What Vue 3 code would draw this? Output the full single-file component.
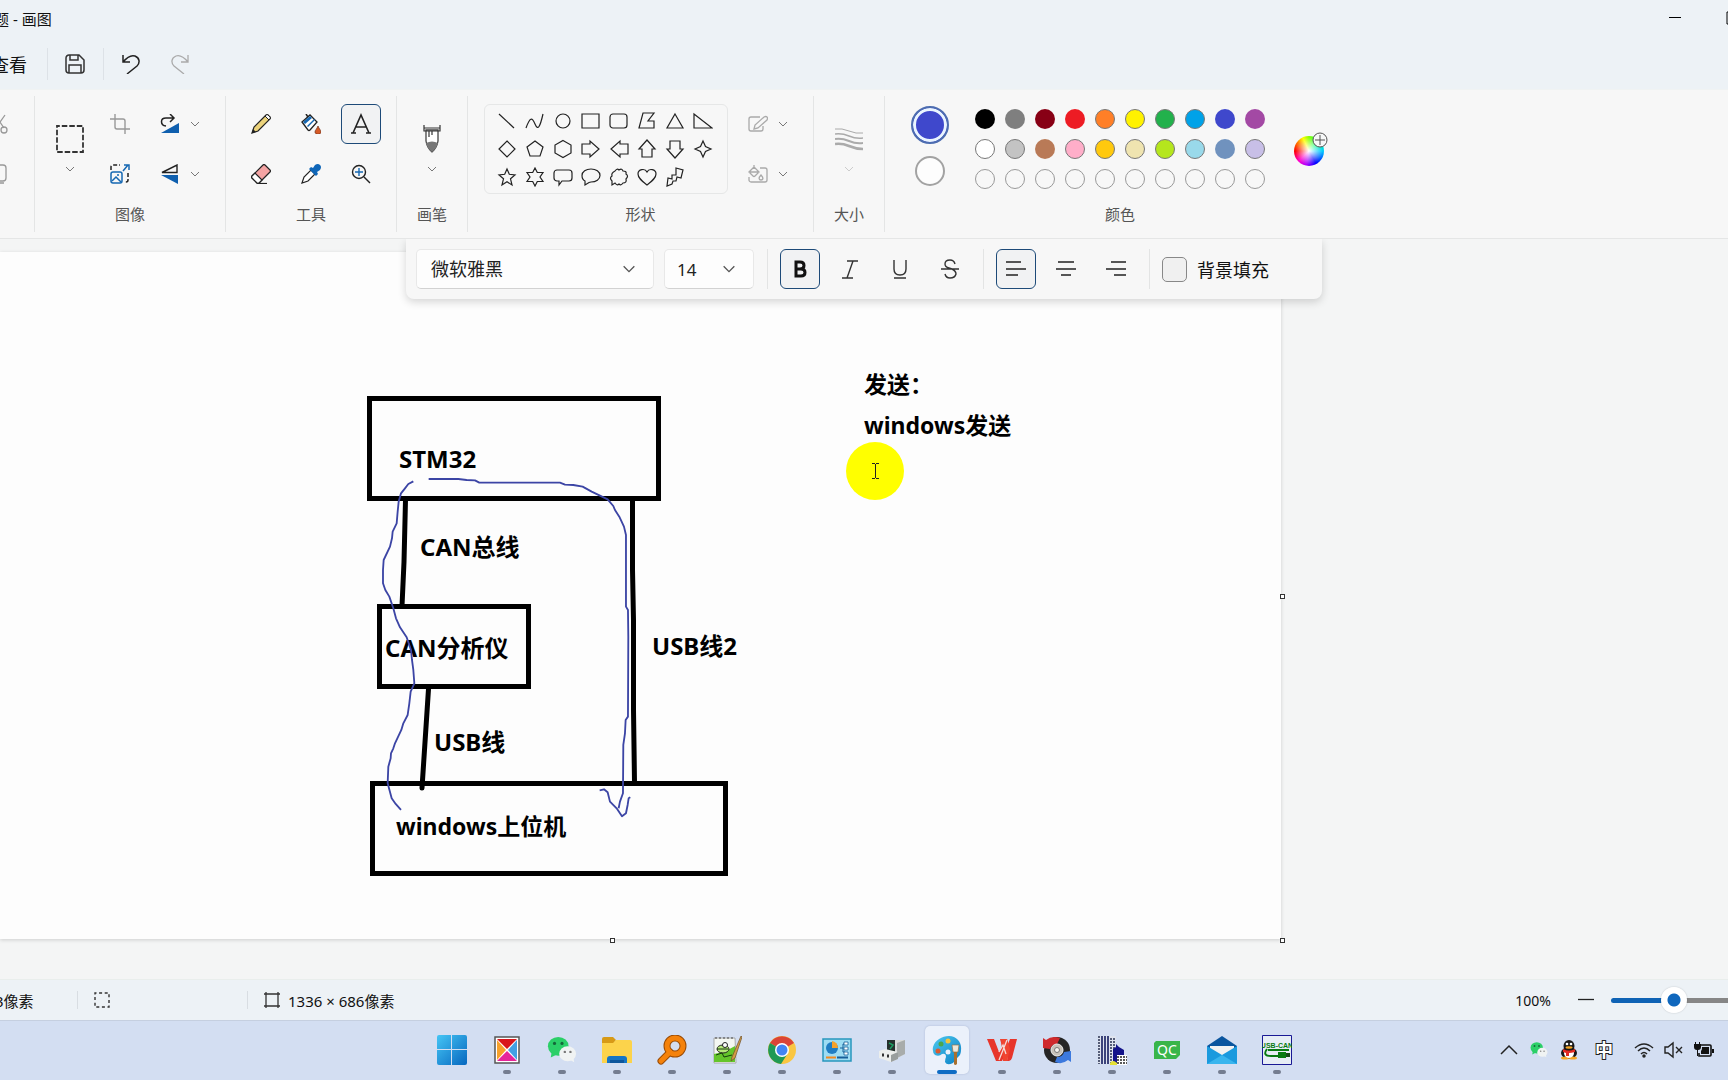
<script setup>
import { ref } from 'vue'

const shapes = [
  'M2 3 17 17',
  'M1 17C5 6 7 6 10 13S15 16 18 3',
  'M10 3a7 7 0 1 0 0 14a7 7 0 1 0 0-14z',
  'M1 3h17v14H1z',
  'M4 3h11a3 3 0 0 1 3 3v8a3 3 0 0 1-3 3H4a3 3 0 0 1-3-3V6a3 3 0 0 1 3-3z',
  'M6 2h11l-6 8h6v7H2z',
  'M10 3 18 17H2z',
  'M1 3v14h18z',
  'M10 2l8 8-8 8-8-8z',
  'M10 2l8 6-3 9H5L2 8z',
  'M10 1.500l8 4.500v8l-8 4.500L2 14V6z',
  'M1 5h8V2l9 8-9 8v-3H1z',
  'M19 5h-8V2l-9 8 9 8v-3h8z',
  'M10 1 2 10h3v8h10v-8h3z',
  'M10 19l-8-9h3V2h10v8h3z',
  'M10 2l2.500 5.500L18 10l-5.500 2.500L10 18l-2.500-5.500L2 10l5.500-2.500z',
  'M10 2l2.300 5.300L18 8l-4.500 3.800L15 18l-5-3.300L5 18l1.500-6.200L2 8l5.700-.7z',
  'M10 1l2.300 4.500L18 5.500l-3 4.500 3 4.500h-5.700L10 19l-2.300-4.500H2L5 10 2 5.500h5.700z',
  'M4 3h12a3 3 0 0 1 3 3v5a3 3 0 0 1-3 3H9l-3 4v-4H4a3 3 0 0 1-3-3V6a3 3 0 0 1 3-3z',
  'M10 2c5 0 9 2.700 9 6.500S15 15 10 15l-2 .5L4 18v-4C2 13 1 11 1 8.500 1 4.700 5 2 10 2z',
  'M6 4q2-3 4-1 3-2 4 1 4 0 3 3 3 2 0 5 1 4-3 4-2 3-4 1-2 2-4-1l-3 2v-4q-3-3 0-5-1-3 3-5z',
  'M10 18C5 14 1 11 1 7c0-5 7-6 9-2 2-4 9-3 9 2 0 4-4 7-9 11z',
  'M11 1 18 3l-2 8-4-1-1 4H8l-1 3-5 2 1-8 4 1V8l4 0z'
]

const palette = [
  ['#000000', '#7f7f7f', '#880015', '#ed1c24', '#ff7f27', '#fff200', '#22b14c', '#00a2e8', '#3f48cc', '#a349a4'],
  ['#ffffff', '#c3c3c3', '#b97a57', '#ffaec9', '#ffc90e', '#efe4b0', '#b5e61d', '#99d9ea', '#7092be', '#c8bfe7'],
  Array(10).fill('')
]
const borderless = ['#000000', '#7f7f7f', '#880015', '#ed1c24', '#3f48cc', '#a349a4', '#b97a57', '#7092be']

const fontFamily = ref('微软雅黑')
const fontSize = ref('14')
const fillBackground = ref(false)
const zoom = ref(50)
</script>

<template>
  <div class="window">
    <svg class="defs" aria-hidden="true">
      <symbol id="chev" viewBox="0 0 12 12"><path d="M2 4l4 4 4-4" fill="none" stroke="currentColor" /></symbol>
      <symbol id="wechat" viewBox="0 0 32 32">
        <ellipse cx="12" cy="12" rx="11" ry="10" fill="#2bcf68" /><path d="M5 18l-1 6 6-3z" fill="#2bcf68" />
        <circle cx="8" cy="9" r="1.700" fill="#14683a" /><circle cx="16" cy="9" r="1.700" fill="#14683a" />
        <ellipse cx="22" cy="20" rx="9" ry="8" fill="#f0f3f3" /><path d="M24 26l5 3-1-6z" fill="#f0f3f3" />
        <circle cx="19" cy="18" r="1.300" fill="#777" /><circle cx="25" cy="18" r="1.300" fill="#777" />
      </symbol>
    </svg>

    <header class="titlebar">
      <span class="title">题 - 画图</span>
      <div class="winbtns">
        <button aria-label="最小化"><svg width="14" height="14" viewBox="0 0 14 14"><path d="M1 6.500h12" stroke="#000" /></svg></button>
        <button aria-label="最大化"><svg width="14" height="14" viewBox="0 0 14 14"><path d="M1 1h12v12H1z" fill="none" stroke="#000" /></svg></button>
      </div>
    </header>

    <nav class="menubar">
      <button class="menu">查看</button>
      <i class="sep"></i>
      <button class="quick" aria-label="保存">
        <svg width="20" height="20" viewBox="0 0 20 20" fill="none" stroke="#333" stroke-width="1.500"><path d="M4 1h10l5 5v10a3 3 0 0 1-3 3H4a3 3 0 0 1-3-3V4a3 3 0 0 1 3-3zM5 1v5h8V1M4 19v-8h12v8" /></svg>
      </button>
      <i class="sep"></i>
      <button class="quick" aria-label="撤消">
        <svg width="20" height="20" viewBox="0 0 20 20" fill="none" stroke="#222" stroke-width="1.500"><path d="M2 1v7h7M2 8C7 2 11 1 14 2c5 2 5 7 2 10l-10 8" /></svg>
      </button>
      <button class="quick" aria-label="重做">
        <svg width="20" height="20" viewBox="0 0 20 20" fill="none" stroke="#aaa" stroke-width="1.300"><path d="M18 1v7h-7M18 8C13 2 9 1 6 2 1 4 1 9 4 12l10 8" /></svg>
      </button>
    </nav>

    <section class="ribbon">
      <div class="group clip">
        <div class="tools one">
          <button aria-label="剪切"><svg width="20" height="20" viewBox="0 0 20 20" fill="none" stroke="#999" stroke-width="1.300"><path d="M5 1l9 13M15 1 6 14" /><circle cx="4" cy="16" r="3" /><circle cx="14" cy="16" r="3" /></svg></button>
          <button aria-label="复制"><svg width="20" height="20" viewBox="0 0 20 20" fill="none" stroke="#999" stroke-width="1.300"><rect x="4" y="1" width="12" height="16" rx="3" /><path d="M2 4v12a3 3 0 0 0 3 3h9" /></svg></button>
        </div>
      </div>

      <div class="group image">
        <div class="content">
          <div class="big">
            <button aria-label="选择"><svg width="28" height="28" viewBox="0 0 28 28"><path d="M1 1h26v26H1z" fill="none" stroke="#333" stroke-width="1.800" stroke-dasharray="5.500 2" stroke-dashoffset="2.700" /></svg></button>
            <svg class="chev"><use href="#chev" /></svg>
          </div>
          <div class="tools two">
            <button aria-label="裁剪"><svg width="20" height="20" viewBox="0 0 20 20" fill="none" stroke="#999" stroke-width="1.400"><path d="M5 0v13a2 2 0 0 0 2 2h13M0 5h13a2 2 0 0 1 2 2v13" /></svg></button>
            <span class="split"><button aria-label="旋转"><svg width="20" height="20" viewBox="0 0 20 20"><path d="M6 12C0 11 0 4 6 4h8M10 0l4 4-4 4" fill="none" stroke="#222" stroke-width="1.500" /><path d="M1 19 19 9v10z" fill="#0f5fae" /></svg></button><svg class="chev"><use href="#chev" /></svg></span>
            <button aria-label="调整大小"><svg width="20" height="20" viewBox="0 0 20 20" fill="none"><path d="M1 6V3a2 2 0 0 1 2-2h7M18 9v7a2 2 0 0 1-2 2h-2" stroke="#222" stroke-width="1.500" stroke-dasharray="4 2" /><rect x="1" y="8" width="11" height="11" rx="2" stroke="#1668b3" stroke-width="1.500" /><path d="M2 17l4-4 5 5M13 7l5-6M14 1h5v5" stroke="#1668b3" stroke-width="1.500" /><circle cx="8" cy="11" r="1" fill="#1668b3" /></svg></button>
            <span class="split"><button aria-label="翻转"><svg width="20" height="20" viewBox="0 0 20 20"><path d="M2 8.500 17 1v7.500z" fill="none" stroke="#222" stroke-width="1.400" /><path d="M1 11h17v9z" fill="#0f5fae" /></svg></button><svg class="chev"><use href="#chev" /></svg></span>
          </div>
        </div>
        <span class="label">图像</span>
      </div>

      <div class="group toolset">
        <div class="tools three">
          <button aria-label="铅笔"><svg width="20" height="20" viewBox="0 0 20 20"><path d="M1 19l2-6L15 1q2-1 3 1 2 1 1 3L7 17z" fill="#ecd37b" stroke="#222" stroke-width="1.200" /><path d="M14 2l4 4 1-1q1-2-1-3-1-2-3-1z" fill="#fff" stroke="#222" /><path d="M1 19l1-4 3 3z" fill="#222" /></svg></button>
          <button aria-label="填充"><svg width="20" height="20" viewBox="0 0 20 20"><path d="M1 8 9 1l7 7-7 8q-1 1-2 0z" fill="#fff" stroke="#222" stroke-width="1.300" /><path d="M2 8l7-6 2 2-7 6zM6 12l7-7 1 1-7 7z" fill="#1668b3" /><path d="M5 0l2 3" stroke="#222" stroke-width="1.500" /><path d="M17 12c1 3 3 4 3 6 0 3-6 3-6 0 0-2 2-3 3-6z" fill="#d65a26" stroke="#6b2a12" stroke-width=".7" /></svg></button>
          <button class="on" aria-label="文本"><svg width="22" height="22" viewBox="0 0 22 22" fill="none" stroke="#222" stroke-width="1.600"><path d="M3 20 11 2l8 18M6 14h10M1 20h5M16 20h5" /></svg></button>
          <button aria-label="橡皮擦"><svg width="20" height="20" viewBox="0 0 20 20"><path d="M1 12 12 1q1-1 2 0l5 5q1 1 0 2L8 19q-1 1-2 0l-5-5q-1-1 0-2z" fill="#f4a3a3" stroke="#222" stroke-width="1.200" /><path d="M1 12l3-3 7 7-3 3q-1 1-2 0l-5-5q-1-1 0-2z" fill="#fff" stroke="#222" stroke-width="1.200" /><path d="M7 19.500h9" stroke="#222" stroke-width="1.200" /></svg></button>
          <button aria-label="颜色选取器"><svg width="20" height="20" viewBox="0 0 20 20"><path d="M1 19l2-6 7-7 4 4-7 7z" fill="#fff" stroke="#222" stroke-width="1.200" /><path d="M8 5l2-2 2 1 2-3q3-2 5 0t0 5l-3 2 1 2-2 2z" fill="#0f66b8" /></svg></button>
          <button aria-label="放大镜"><svg width="20" height="20" viewBox="0 0 20 20" fill="none" stroke="#222" stroke-width="1.400"><circle cx="8" cy="8" r="6.500" /><path d="M13 13l6 6" /><path d="M8 4v8M4 8h8" stroke="#1668b3" /></svg></button>
        </div>
        <span class="label">工具</span>
      </div>

      <div class="group brush">
        <div class="content"><div class="big">
          <button aria-label="画笔"><svg width="20" height="30" viewBox="0 0 20 30"><path d="M4 6h12v11q-1 7-6 11-5-4-6-11z" fill="#fff" stroke="#444" stroke-width="1.300" /><path d="M4 19q6-3 12 0-1 5-6 9-5-4-6-9z" fill="#777" /><path d="M2 1v6h16V1M2 4h16M7 7v6M10 7v4" fill="none" stroke="#333" stroke-width="1.200" /></svg></button>
          <svg class="chev"><use href="#chev" /></svg>
        </div></div>
        <span class="label">画笔</span>
      </div>

      <div class="group shapes">
        <div class="content">
          <div class="shapebox">
            <button v-for="(d, i) in shapes" :key="i" :aria-label="'形状 ' + (i + 1)"><svg width="20" height="20" viewBox="0 0 20 20"><path :d="d" fill="none" stroke="#222" stroke-width="1.200" /></svg></button>
          </div>
          <div class="tools one">
            <span class="split"><button aria-label="轮廓"><svg width="20" height="20" viewBox="0 0 20 20" fill="none" stroke="#aaa" stroke-width="1.300"><path d="M12 3H3a2 2 0 0 0-2 2v10a2 2 0 0 0 2 2h10a2 2 0 0 0 2-2v-3" /><path d="M6 15l1-4 9-8q2-1 3 0 1 1 0 3l-9 8z" /></svg></button><svg class="chev"><use href="#chev" /></svg></span>
            <span class="split"><button aria-label="填充形状"><svg width="20" height="20" viewBox="0 0 20 20" fill="none" stroke="#aaa" stroke-width="1.300"><path d="M12 4h5a2 2 0 0 1 2 2v10a2 2 0 0 1-2 2H3a2 2 0 0 1-2-2v-3" /><path d="M1 8l5-5 5 5-4 4q-1 1-2 0zM2 8h8M6 1v4M13 11c3 3 2 5 0 5s-3-2 0-5z" /></svg></button><svg class="chev"><use href="#chev" /></svg></span>
          </div>
        </div>
        <span class="label">形状</span>
      </div>

      <div class="group size">
        <div class="content"><div class="big">
          <button aria-label="大小"><svg width="28" height="26" viewBox="0 0 28 26" fill="none" stroke="#aaa"><path d="M0 3q7-1 14 2t14 2" /><path d="M0 8q7-1 14 2t14 2" stroke-width="1.500" /><path d="M0 13q7-1 14 2t14 2" stroke-width="2" /><path d="M0 18q7-1 14 2t14 3" stroke-width="2.600" /></svg></button>
          <svg class="chev pale"><use href="#chev" /></svg>
        </div></div>
        <span class="label">大小</span>
      </div>

      <div class="group colors">
        <div class="content">
          <div class="current">
            <button class="primary" aria-label="颜色 1"></button>
            <button class="secondary" aria-label="颜色 2"></button>
          </div>
          <div class="palette">
            <template v-for="(row, r) in palette" :key="r">
              <button v-for="(c, i) in row" :key="i" :aria-label="'色块 ' + (r * 10 + i + 1)" :class="{ flat: borderless.includes(c), empty: !c }" :style="{ backgroundColor: c || 'transparent' }"></button>
            </template>
          </div>
          <button class="wheel" aria-label="编辑颜色"><svg viewBox="0 0 16 16" width="16" height="16"><circle cx="8" cy="8" r="7" fill="#f7f8f8" stroke="#555" /><path d="M8 3v10M3 8h10" stroke="#555" /></svg></button>
        </div>
        <span class="label">颜色</span>
      </div>
    </section>

    <main class="workspace">
      <div class="textbar">
        <label class="pick family"><select v-model="fontFamily" aria-label="字体"><option>微软雅黑</option></select><svg class="arrow"><use href="#chev" /></svg></label>
        <label class="pick points"><select v-model="fontSize" aria-label="字号"><option>14</option></select><svg class="arrow"><use href="#chev" /></svg></label>
        <i class="bar"></i>
        <div class="styles">
          <button class="on" aria-label="加粗"><svg width="22" height="22" viewBox="0 0 22 22"><path d="M7 4h4q4 0 4 3.500T11 11H7zM7 11h5q4 0 4 3.500T12 18H7z" fill="none" stroke="#111" stroke-width="3" /></svg></button>
          <button aria-label="倾斜"><svg width="22" height="22" viewBox="0 0 22 22"><path d="M8 3h11M3 20h11M14 3 8 20" fill="none" stroke="#333" stroke-width="1.400" /></svg></button>
          <button aria-label="下划线"><svg width="22" height="22" viewBox="0 0 22 22"><path d="M5 2v9q0 6 6 6t6-6V2M5 20h12" fill="none" stroke="#333" stroke-width="1.400" /></svg></button>
          <button aria-label="删除线"><svg width="22" height="22" viewBox="0 0 22 22"><path d="M16 6q-1-4-5-4-5 0-5 4 0 3 4 4l3 1q4 2 4 5-1 4-6 4-4 0-5-4M2 11h18" fill="none" stroke="#333" stroke-width="1.400" /></svg></button>
        </div>
        <i class="bar"></i>
        <div class="styles">
          <button class="on" aria-label="左对齐"><svg width="22" height="22" viewBox="0 0 22 22"><path d="M1 4h15M1 11h20M1 17h12" stroke="#222" stroke-width="1.400" /></svg></button>
          <button aria-label="居中"><svg width="22" height="22" viewBox="0 0 22 22"><path d="M3 4h16M1 11h20M6 17h10" stroke="#222" stroke-width="1.400" /></svg></button>
          <button aria-label="右对齐"><svg width="22" height="22" viewBox="0 0 22 22"><path d="M6 4h15M1 11h20M9 17h12" stroke="#222" stroke-width="1.400" /></svg></button>
        </div>
        <i class="bar"></i>
        <label class="fill"><input v-model="fillBackground" type="checkbox" />背景填充</label>
      </div>

      <div class="canvas">
        <svg class="drawing" viewBox="0 252 1281 687" width="1281" height="687">
          <g fill="none" stroke="#000" stroke-width="5">
            <path d="M369.500 398.500h289v100h-289zM379.500 606.500h149v80h-149zM372.500 783.500h353v90h-353z" />
            <path d="M405.500 500 404 562 402 606M632.500 500v70l1 50v90l1 72" />
            <path d="M428.500 689 422 788" stroke-linecap="round" />
          </g>
          <g class="ink caps">
            <text x="399" y="468">STM32</text>
            <text x="420" y="556">CAN总线</text>
            <text x="385" y="657">CAN分析仪</text>
            <text x="434" y="751">USB线</text>
            <text x="652" y="655">USB线2</text>
          </g>
          <g class="ink">
            <text x="396" y="835">windows上位机</text>
            <text x="864" y="393">发送：</text>
            <text x="864" y="434">windows发送</text>
          </g>
          <g transform="translate(340 380) scale(.3333)" fill="none" stroke="#3c45a5" stroke-width="5.500" stroke-linejoin="round">
            <path d="M220 304 205 312 195 325 183 340 176 365 173 395 170 430 158 455 156 475 150 500 131 540 129 570 129 610 136 630 148 650 160 685 168 715 180 742 200 772 213 810 216 840 220 870 223 910 212 935 208 970 203 1005 190 1030 184 1050 165 1090 160 1105 153 1120 152 1135 145 1160 143 1210 155 1255 167 1272 183 1290" />
            <path d="M266 297 355 297 380 300 405 301 418 308 660 308 675 314 700 315 728 320 755 335 780 347 803 358 820 378 825 390 838 410 852 440 858 465 858 680 864 690 865 770 864 1010 857 1020 855 1060 850 1095 849 1240 840 1265 836 1285" />
            <path d="M779 1231 792 1228 803 1237 810 1265 830 1285 846 1309 858 1300 863 1275 866 1255 871 1252" />
          </g>
          <circle cx="875" cy="471" r="29" fill="#ff0" />
          <path d="M872 463.500h3M876 463.500h3M875.500 464v14M872 478.500h3M876 478.500h3" fill="none" stroke="#222" />
        </svg>
        <i class="handle east"></i><i class="handle south"></i><i class="handle corner"></i>
      </div>
    </main>

    <footer class="status">
      <span class="pos">3像素</span>
      <div class="cell selection"><svg width="16" height="16" viewBox="0 0 16 16"><path d="M1 1h14v14H1z" fill="none" stroke="#333" stroke-width="1.400" stroke-dasharray="3 2.600" stroke-dashoffset="1.500" /></svg></div>
      <div class="cell"><svg width="16" height="16" viewBox="0 0 16 16"><path d="M0 2h16M0 14h16M2 0v16M14 0v16" stroke="#333" stroke-width="1.300" /></svg><span>1336 × 686像素</span></div>
      <div class="zoomer">
        <span>100%</span>
        <button aria-label="缩小"><svg width="16" height="16" viewBox="0 0 16 16"><path d="M0 7.500h16" stroke="#222" stroke-width="1.300" /></svg></button>
        <input v-model="zoom" type="range" min="0" max="100" aria-label="缩放" />
      </div>
    </footer>

    <footer class="taskbar">
      <span></span>
      <nav class="apps">
        <button class="start" aria-label="开始"><svg viewBox="0 0 30 30"><defs><linearGradient id="win" x2="1" y2="1"><stop stop-color="#45c5f5" /><stop offset="1" stop-color="#0667bf" /></linearGradient></defs><path d="M2 0h12v14H0V2q0-2 2-2zM15 0h13q2 0 2 2v12H15zM0 15h14v15H2q-2 0-2-2zM15 15h15v13q0 2-2 2H15z" fill="url(#win)" /></svg></button>
        <button aria-label="剪辑"><svg viewBox="0 0 30 30"><path d="M3 2h24v26H3z" fill="#fff" stroke="#555" stroke-width="1.500" /><path d="M5 4h20L15 14z" fill="#d9151c" /><path d="M5 5l9 10-9 10z" fill="#f7a12b" /><path d="M25 5l-9 10 9 10z" fill="#43a0e4" /><path d="M5 26h20L15 16z" fill="#e6259a" /></svg></button>
        <button aria-label="微信"><svg viewBox="0 0 32 32"><use href="#wechat" /></svg></button>
        <button aria-label="文件资源管理器"><svg viewBox="0 0 30 30"><path d="M0 4q0-2 2-2h9l3 3-3 4H0z" fill="#d79a17" /><path d="M0 8h11l3-3h14q2 0 2 2v21H0z" fill="#fcd34b" /><path d="M5 28v-4q0-3 3-3h14q3 0 3 3v4z" fill="#1475c5" /><path d="M8 25h14v3H8z" fill="#0d569c" /></svg></button>
        <button aria-label="搜索"><svg viewBox="0 0 30 30"><path d="M13 17 4 26" stroke="#9b4c06" stroke-width="7" stroke-linecap="round" /><circle cx="18" cy="11" r="8" fill="none" stroke="#9b4c06" stroke-width="7" /><path d="M13 17 4 26" stroke="#f5820b" stroke-width="5" stroke-linecap="round" /><circle cx="18" cy="11" r="8" fill="none" stroke="#f5820b" stroke-width="5" /></svg></button>
        <button aria-label="记事本"><svg viewBox="0 0 30 30"><path d="M2 3h21l1 25H2z" fill="#f4f7f2" stroke="#999" stroke-width=".8" /><path d="M2 19q11-2 21-8v16H2z" fill="#64c52b" /><path d="M4 2v2M8 2v2M12 2v2M16 2v2M20 2v2" stroke="#444" /><ellipse cx="11" cy="14" rx="6" ry="4" fill="#b5e878" stroke="#222" /><circle cx="13" cy="10" r="2.500" fill="#fff" stroke="#222" /><path d="M4 20l6-2 2 4 8-2M5 14h11" fill="none" stroke="#163b0c" /><path d="M29 1 20 22l-1 4 4-3 7-21z" fill="#d39b45" stroke="#6d5029" stroke-width=".7" /></svg></button>
        <button aria-label="浏览器"><svg viewBox="0 0 30 30"><circle cx="15" cy="15" r="14" fill="#f9c642" /><path d="M15 15 3 8A14 14 0 0 1 27 8z" fill="#db4437" /><path d="M15 15 3 8a14 14 0 0 0 11 21l7-11z" fill="#209a55" /><circle cx="15" cy="15" r="7" fill="#fff" /><circle cx="15" cy="15" r="5.500" fill="#4285f4" /></svg></button>
        <button aria-label="控制面板"><svg viewBox="0 0 30 30"><path d="M1 4h28v22H1z" fill="#9ddcf3" stroke="#2896bd" stroke-width="1.500" /><circle cx="10" cy="13" r="6" fill="#1f7dc3" /><path d="M10 13V6a7 7 0 0 1 6 7z" fill="#f6a22b" /><path d="M18 13h3M21 9v8M21 9h2M21 17h2" fill="none" stroke="#175f99" /><path d="M22 7h4v3h-4zM22 12h4v3h-4zM22 17h4v3h-4z" fill="#fff" stroke="#175f99" stroke-width=".8" /><path d="M4 22.500h10" stroke="#f28a20" stroke-width="2" /><path d="M15 22.500h11" stroke="#175f99" stroke-width="2" /></svg></button>
        <button aria-label="设备"><svg viewBox="0 0 30 30"><path d="M12 6l4-1h12v14l-9 5z" fill="#d8dad9" /><path d="M20 8l8-3v14l-8 4z" fill="#a8acab" /><path d="M10 5h8v12h-8z" fill="#25302c" /><path d="M12 8l4 2-3 4" fill="none" stroke="#1d9a5f" stroke-width="1.500" /><path d="M2 16l6-2 13 3v7l-7 3-12-4z" fill="#eceeec" /><path d="M14 20l7-3v7l-7 3z" fill="#999e9d" /><path d="M5 20h2M10 21h2" stroke="#333" stroke-width="3" /></svg></button>
        <button class="active" aria-label="画图"><svg viewBox="0 0 30 30"><defs><linearGradient id="pal" x2="1" y2="1"><stop stop-color="#4cc9ee" /><stop offset="1" stop-color="#0b7fc6" /></linearGradient></defs><path d="M17 1C25 1 30 8 29 15q0 5-3 7l-5 6q-6 3-8-1 0-3 1-5 0-4-4-3-3 3-7 1-3-3-2-8C3 5 10 1 17 1z" fill="url(#pal)" /><circle cx="16" cy="17" r="2.500" fill="#eaf1fb" /><circle cx="9" cy="9" r="2.500" fill="#4ca64c" /><circle cx="16" cy="6" r="2.500" fill="#f5c53c" /><circle cx="6" cy="16" r="2.500" fill="#d95c32" /><path d="M20 10h7l-1 7h-5z" fill="#eee8da" stroke="#987348" stroke-width=".7" /><path d="M22 17h3v12q-2 2-3 0z" fill="#a9702f" /></svg></button>
        <button aria-label="办公"><svg viewBox="0 0 30 30"><path d="M0 4h7l5 13 3-6-2-7h7l2 7-7 15H9z" fill="#e7352b" /><path d="M30 4h-7l-4 10 2 4-1 8h2q2 0 3-3z" fill="#e7352b" /><path d="M14 4h6l3 10-3 12h-4z" fill="#f0442f" /><path d="M12 17l4-7 3 9M20 5l-8 20" fill="none" stroke="#f5dcd8" stroke-width="1.300" /></svg></button>
        <button aria-label="同步"><svg viewBox="0 0 30 30"><circle cx="15" cy="15" r="13" fill="#252525" /><path d="M1 13V3l3 2Q10 0 18 3l-3 6q-5 0-7 5z" fill="#cf292c" /><path d="M29 16v11l-3-2q-6 5-13 2l2-5q6 0 7-5z" fill="#3c79de" /><circle cx="15" cy="15" r="6" fill="#c8c2b9" stroke="#eee" /><circle cx="15" cy="15" r="2.500" fill="#f7f4ee" stroke="#777" /></svg></button>
        <button aria-label="大厦"><svg viewBox="0 0 30 30"><path d="M1 1h18v28H1z" fill="#dfe4ef" /><path d="M4 1h2v28H4zM7 1h2v28H7zM10 1h2v28h-2z" fill="#3c447c" /><path d="M2 1v28M14 3v26M17 3v26" stroke="#293052" stroke-width="1.500" stroke-dasharray="2 1" /><path d="M16 14l3-2v-3l3 3 5 3v14H16z" fill="#14148a" /><path d="M20 20h10v10H20z" fill="#fff" /><path d="M20 22h10M20 25h10M20 28h10" stroke="#222" stroke-width="1.500" stroke-dasharray="2 1" /><path d="M13 28q3-4 7 0v2h-7z" fill="#e5e136" /></svg></button>
        <button aria-label="QC"><svg viewBox="0 0 30 30"><path d="M4 6h24v14l-4 4H2V8z" fill="#39b54a" /><text x="15" y="20" text-anchor="middle" class="qc">QC</text></svg></button>
        <button aria-label="邮件"><svg viewBox="0 0 30 30"><path d="M0 11 15 1l15 10v4H0z" fill="#0b559e" /><path d="M3 11h24v10H3z" fill="#f2f2f2" /><path d="M0 11l15 9 15-9v18H0z" fill="#1b9ade" /><path d="M0 29l15-9 15 9z" fill="#39b5ee" /></svg></button>
        <button aria-label="USB-CAN"><svg viewBox="0 0 30 30"><path d="M.5.5h29v29H.5z" fill="#e6edf5" stroke="#191995" /><text x="15" y="13" text-anchor="middle" class="can">USB-CAN</text><path d="M5 14q-5 7 4 7h8" fill="none" stroke="#087a12" stroke-width="2" /><path d="M6 14h21v2H6zM16 17h8v6h-8z" fill="#087a12" /><path d="M24 18h4v4h-4z" fill="#164a18" /></svg></button>
      </nav>
      <div class="tray">
        <div class="near">
          <button aria-label="显示隐藏的图标"><svg width="18" height="18" viewBox="0 0 18 18"><path d="M1 13l8-8 8 8" fill="none" stroke="#222" stroke-width="1.500" /></svg></button>
          <button aria-label="微信"><svg width="18" height="18"><use href="#wechat" /></svg></button>
          <button class="qq" aria-label="QQ"><svg width="18" height="20" viewBox="0 0 18 20"><ellipse cx="9" cy="13" rx="8" ry="6" fill="#181818" /><ellipse cx="5" cy="18" rx="4" ry="1.500" fill="#f5a623" /><ellipse cx="13" cy="18" rx="4" ry="1.500" fill="#f5a623" /><ellipse cx="9" cy="13" rx="5" ry="5" fill="#fff" /><ellipse cx="9" cy="6" rx="5.500" ry="6" fill="#181818" /><circle cx="7" cy="4" r="1.300" fill="#fff" /><circle cx="11" cy="4" r="1.300" fill="#fff" /><ellipse cx="9" cy="7.500" rx="3.500" ry="1.200" fill="#f5a623" /><path d="M3 9q6 3 12 0v3q-4 1-6 1v3H6v-3l-3-1z" fill="#e22a22" /></svg></button>
          <button aria-label="输入法"><svg width="20" height="20" viewBox="0 0 20 20"><text x="10" y="17" text-anchor="middle" class="ime">中</text></svg></button>
        </div>
        <button class="far" aria-label="网络和音量">
          <svg width="20" height="18" viewBox="0 0 20 18" fill="none" stroke="#222" stroke-width="1.500"><path d="M1 7q9-8 18 0M4 10q6-6 12 0M7 13q3-3 6 0" /><circle cx="10" cy="15" r="1" fill="#222" /></svg>
          <svg width="20" height="18" viewBox="0 0 20 18" fill="none" stroke="#222" stroke-width="1.400"><path d="M1 6h3l5-4v14l-5-4H1zM12 6l6 6M18 6l-6 6" /></svg>
          <svg width="20" height="18" viewBox="0 0 20 18"><path d="M7 4h9q1 0 1 1v9q0 1-1 1H5v-3" fill="none" stroke="#111" stroke-width="1.600" /><path d="M8 6h7v7H7v-3q1-1 1-3zM18 8h2v4h-2zM0 3h7v3q0 3-3 3v6H3V9Q0 9 0 6zM1 1h1v2H1zM5 1h1v2H5z" fill="#111" /></svg>
        </button>
      </div>
    </footer>
  </div>
</template>

<style>
body { margin: 0; background: #f4f5f5; }
</style>

<style scoped>
.window { display: flex; flex-direction: column; min-height: 100vh; overflow: hidden; background: #edf2f6; color: #111; font-family: "Noto Sans", "Noto Sans CJK SC", sans-serif; font-size: 15px; }
* { box-sizing: border-box; }
button { padding: 0; border: 0; background: transparent; font: inherit; color: inherit; display: flex; align-items: center; justify-content: center; flex-shrink: 0; }
.defs { position: absolute; width: 0; height: 0; }
.titlebar { height: 38px; padding-bottom: 2px; display: flex; align-items: center; justify-content: space-between; }
.title { margin-left: -6px; white-space: nowrap; }
.winbtns { display: flex; margin-right: -34px; }
.winbtns button { width: 58px; height: 36px; }
.menubar { height: 51px; display: flex; align-items: center; }
.menu { margin: 0 20px 0 -9px; font-size: 18px; font-family: "Noto Sans CJK SC", sans-serif; }
.sep { width: 1px; height: 32px; background: #dde2e7; }
.quick { width: 40px; height: 40px; margin: 0 0 0 7px; }
.quick + .sep { margin-left: 8px; }
.quick + .quick { margin-left: 9px; }

.ribbon { height: 150px; padding-top: 6px; display: flex; background: #f7f7f7; border-top: 1px solid #f0f3f3; border-bottom: 1px solid #e5e6e6; }
.group { height: 136px; padding: 8px 0 7px; display: flex; flex-direction: column; align-items: center; justify-content: space-between; border-right: 1px solid #e4e5e5; flex-shrink: 0; }
.clip { width: 35px; align-items: flex-start; }
.clip .tools { margin-left: -20px; }
.image { width: 191px; }
.toolset { width: 171px; }
.brush { width: 71px; }
.shapes { width: 346px; }
.size { width: 71px; }
.colors { width: 470px; border-right: 0; }
.content { display: flex; gap: 10px; }
.label { color: #555; line-height: 22px; }
.tools { display: grid; grid-auto-rows: 40px; gap: 10px; }
.two { grid-template-columns: 40px 60px; }
.three { grid-template-columns: 40px 40px 40px; }
.tools button { width: 40px; height: 40px; }
.split { display: flex; align-items: center; }
.chev { width: 12px; height: 12px; color: #777; }
.pale { color: #ccc; }
.split .chev { margin-left: -1px; flex-shrink: 0; }
.big { display: flex; flex-direction: column; align-items: center; width: 40px; height: 90px; padding-top: 15px; gap: 4px; }
.big button { width: 40px; height: 40px; }
.tools .on, .styles .on { border: 1px solid #1d4a78; border-radius: 6px; background: #f1f2f3; }
.shapebox { width: 244px; height: 90px; padding: 2px 8px; display: grid; grid-template-columns: repeat(8, 28px); grid-auto-rows: 28px; border: 1px solid #e6e7e7; border-radius: 6px; }
.shapes .content { width: 314px; }
.colors .content { align-items: flex-start; gap: 0; }
.colors .content { padding-right: 5px; }
.current { width: 38px; display: flex; flex-direction: column; align-items: center; gap: 12px; padding-top: 2px; margin-right: 26px; }
.primary { width: 38px; height: 38px; border-radius: 50%; border: 2px solid #4d6db0; background: #3f48cc; box-shadow: inset 0 0 0 3px #eaf5ff; }
.secondary { width: 30px; height: 30px; border-radius: 50%; border: 2px solid #a2a2a2; background: #fdfdfd; }
.palette { display: grid; grid-template-columns: repeat(10, 20px); grid-auto-rows: 20px; gap: 10px; padding-top: 5px; }
.palette button { border-radius: 50%; border: 1px solid #777; }
.palette .flat { border-color: transparent; }
.palette .empty { border-color: #999; }
.wheel { position: relative; width: 30px; height: 30px; margin: 32px 0 0 29px; border-radius: 50%; background: radial-gradient(circle, #fff, transparent 65%), conic-gradient(#8f0, #0f8 50deg, #0cf 90deg, #00f 150deg, #a0f 190deg, #f0c 225deg, #f00 270deg, #f80 310deg, #ff0 335deg, #8f0); }
.wheel svg { position: absolute; right: -4px; top: -4px; }

.workspace { flex: 1; position: relative; padding-top: 13px; background: #f4f5f5; }
.textbar { position: absolute; z-index: 2; top: 0; left: 50%; transform: translateX(-50%); width: 916px; height: 60px; padding: 0 10px; display: flex; align-items: center; background: #f7f7f7; border-radius: 0 0 8px 8px; box-shadow: 0 3px 8px rgba(0, 0, 0, .16); clip-path: inset(0 -12px -16px -12px); }
.pick { position: relative; height: 40px; }
.pick select { appearance: none; width: 100%; height: 40px; padding: 0 14px; border: 1px solid #e8e8e8; border-bottom-color: #d2d2d2; border-radius: 5px; background: #fdfdfd; font: 18px "Noto Sans", "Noto Sans CJK SC", sans-serif; color: #222; }
.points select { padding: 0 12px; font-size: 17px; }
.family { width: 238px; margin-right: 10px; }
.points { width: 90px; }
.arrow { position: absolute; right: 17px; top: 12px; width: 16px; height: 16px; color: #555; pointer-events: none; }
.bar { width: 1px; height: 40px; margin: 0 12px 0 13px; background: #e3e4e4; }
.styles { display: flex; gap: 10px; }
.styles button { width: 40px; height: 40px; }
.fill { display: flex; align-items: center; gap: 10px; font-size: 18px; white-space: nowrap; font-family: "Noto Sans CJK SC", sans-serif; }
.fill input { appearance: none; width: 25px; height: 25px; margin: 0; border: 1px solid #888; border-radius: 5px; background: #f0f0f0; }
.canvas { position: relative; width: 1281px; height: 687px; background: #fdfdfd; box-shadow: 0 1px 4px rgba(0, 0, 0, .16); }
.drawing { display: block; }
.ink text { font: 700 23px "Noto Sans", "Noto Sans CJK SC", sans-serif; fill: #000; }
.caps text { font-size: 24px; }
.handle { position: absolute; width: 5px; height: 5px; border: 1px solid #333; background: #fff; }
.east { right: -4px; top: 342px; }
.south { left: 610px; bottom: -4px; }
.corner { right: -4px; bottom: -4px; }

.status { height: 41px; display: flex; align-items: center; background: #edf2f6; border-top: 1px solid #e9eeec; white-space: nowrap; }
.pos { margin-left: -5px; width: 82px; }
.cell { display: flex; align-items: center; gap: 8px; height: 18px; padding-left: 16px; border-left: 1px solid #d8dde2; }
.selection { width: 170px; }
.zoomer { margin: 0 -8px 0 auto; display: flex; align-items: center; font-size: 14px; }
.zoomer button { margin: 0 17px 0 27px; }
.zoomer input { appearance: none; width: 125px; height: 26px; margin: 0; background: transparent; }
.zoomer input::-webkit-slider-runnable-track { height: 5px; border-radius: 3px; background: linear-gradient(90deg, #0f63b5 50%, #868686 50%); }
.zoomer input::-webkit-slider-thumb { appearance: none; width: 26px; height: 26px; margin-top: -11px; border-radius: 50%; background: radial-gradient(circle, #0f67bd 6px, #fff 7px); box-shadow: 0 0 2px rgba(0, 0, 0, .2); }

.taskbar { height: 60px; padding-bottom: 2px; display: grid; grid-template-columns: 1fr auto 1fr; align-items: center; background: #d3def2; border-top: 1px solid #c5cfe0; }
.apps { display: flex; gap: 11px; }
.apps button { position: relative; width: 44px; height: 48px; border-radius: 5px; }
.apps svg { width: 30px; height: 30px; }
.apps button::after { content: ""; position: absolute; bottom: 0; width: 8px; height: 4px; border-radius: 2px; background: #747d90; }
.apps .start::after { display: none; }
.apps .active { background: #ebf1fb; box-shadow: 0 0 2px rgba(80, 100, 140, .3); }
.apps .active::after { width: 20px; background: #0f6cc4; }
.qc { font: 14px "Noto Sans", sans-serif; fill: #fff; }
.can { font: 700 7px "Liberation Sans", sans-serif; fill: #087a12; }
.ime { font: 700 18px "Noto Sans CJK SC", sans-serif; fill: #fff; stroke: #222; stroke-width: 2px; paint-order: stroke; }
.tray { display: flex; align-items: center; justify-content: flex-end; gap: 20px; padding-right: 14px; }
.near { display: flex; gap: 12px; }
.qq { margin-right: 4px; }
.far { gap: 10px; }
</style>
